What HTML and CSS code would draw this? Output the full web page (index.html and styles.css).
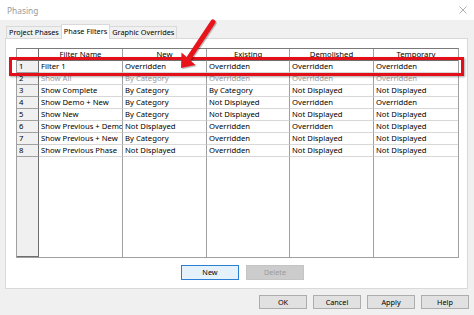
FILE: index.html
```html
<!DOCTYPE html>
<html>
<head>
<meta charset="utf-8">
<link rel="stylesheet" href="styles.css">
</head>
<body>
<div class="window">
  <div class="titlebar">
    <span class="title">Phasing</span>
    <svg class="close" width="8" height="8" viewBox="0 0 8 8"><path d="M0.5 0.5L7.5 7.5M7.5 0.5L0.5 7.5" stroke="#9a9a9a" stroke-width="0.8" fill="none"/></svg>
  </div>
  <div class="tabs">
    <div class="tab">Project Phases</div>
    <div class="tab active">Phase Filters</div>
    <div class="tab">Graphic Overrides</div>
  </div>
  <div class="panel">
    <div class="grid">
      <div class="c hd rh"></div>
      <div class="c hd">Filter Name</div>
      <div class="c hd">New</div>
      <div class="c hd">Existing</div>
      <div class="c hd">Demolished</div>
      <div class="c hd">Temporary</div>

      <div class="c rh">1</div><div class="c">Filter 1</div><div class="c">Overridden</div><div class="c">Overridden</div><div class="c">Overridden</div><div class="c">Overridden</div>
      <div class="c rh">2</div><div class="c faded">Show All</div><div class="c faded">By Category</div><div class="c faded">Overridden</div><div class="c faded">Overridden</div><div class="c faded">Overridden</div>
      <div class="c rh">3</div><div class="c">Show Complete</div><div class="c">By Category</div><div class="c">By Category</div><div class="c">Not Displayed</div><div class="c">Not Displayed</div>
      <div class="c rh">4</div><div class="c">Show Demo + New</div><div class="c">By Category</div><div class="c">Not Displayed</div><div class="c">Overridden</div><div class="c">Overridden</div>
      <div class="c rh">5</div><div class="c">Show New</div><div class="c">By Category</div><div class="c">Not Displayed</div><div class="c">Not Displayed</div><div class="c">Not Displayed</div>
      <div class="c rh">6</div><div class="c">Show Previous + Demo</div><div class="c">Not Displayed</div><div class="c">Overridden</div><div class="c">Overridden</div><div class="c">Not Displayed</div>
      <div class="c rh">7</div><div class="c">Show Previous + New</div><div class="c">By Category</div><div class="c">Overridden</div><div class="c">Not Displayed</div><div class="c">Not Displayed</div>
      <div class="c rh">8</div><div class="c">Show Previous Phase</div><div class="c">Not Displayed</div><div class="c">Overridden</div><div class="c">Not Displayed</div><div class="c">Not Displayed</div>

      <div class="c rh fill"></div><div class="c fill"></div><div class="c fill"></div><div class="c fill"></div><div class="c fill"></div><div class="c fill"></div>
    </div>
    <div class="panel-buttons">
      <div class="btn primary">New</div>
      <div class="btn disabled">Delete</div>
    </div>
  </div>
  <div class="footer">
    <div class="btn">OK</div>
    <div class="btn">Cancel</div>
    <div class="btn">Apply</div>
    <div class="btn">Help</div>
  </div>

  <div class="highlight"></div>
  <svg class="arrow" width="60" height="60" viewBox="0 0 60 60">
    <g opacity="0.25" transform="translate(1.2,1.2)">
      <line x1="43" y1="7" x2="19" y2="43" stroke="#000" stroke-width="5" stroke-linecap="round"/>
      <polygon points="11,53 11.5,37.5 25.5,50" fill="#000"/>
    </g>
    <line x1="43" y1="7" x2="19" y2="43" stroke="#e8141c" stroke-width="5" stroke-linecap="round"/>
    <polygon points="11,53 11.5,37.5 25.5,50" fill="#e8141c"/>
  </svg>
</div>
</body>
</html>
```
FILE: styles.css
```css
html, body {
  margin: 0;
  padding: 0;
}
body {
  width: 474px;
  height: 315px;
  overflow: hidden;
  font-family: "Noto Sans", "Open Sans", sans-serif;
  font-size: 7.7px;
  color: #000;
}
.window {
  position: relative;
  width: 474px;
  height: 315px;
  background: #f0f0f0;
  display: flex;
  flex-direction: column;
}
.titlebar {
  height: 20px;
  background: #ffffff;
  display: flex;
  align-items: center;
  justify-content: space-between;
  padding: 0 7px 0 7px;
}
.title {
  font-size: 8.4px;
  color: #9a9a9a;
}
.close {
  display: block;
}
.tabs {
  display: flex;
  align-items: flex-end;
  padding-left: 6px;
  margin-top: 4px;
  height: 14px;
  position: relative;
  z-index: 1;
}
.tab {
  height: 12px;
  box-sizing: border-box;
  border: 1px solid #d9d9d9;
  border-bottom: none;
  background: #f0f0f0;
  padding: 0 2px;
  line-height: 11px;
  white-space: nowrap;
  font-size: 7.3px;
}
.tab + .tab {
  margin-left: -1px;
}
.tab.active {
  height: 15px;
  margin-bottom: -1px;
  background: #ffffff;
  line-height: 13px;
  padding: 0 2px;
}
.panel {
  margin: 0 6px 0 5px;
  height: 251px;
  box-sizing: border-box;
  background: #ffffff;
  border: 1px solid #d9d9d9;
  padding: 9px 0 0 10px;
  display: flex;
  flex-direction: column;
}
.grid {
  display: grid;
  grid-template-columns: 22px 84px 84px 83px 84px 84px;
  grid-template-rows: 12px repeat(8, 12px) 1fr;
  width: 443px;
  height: 210px;
  box-sizing: border-box;
  border: 1px solid #a0a0a0;
  border-top-color: #7a7a7a;
}
.c {
  box-sizing: border-box;
  border-right: 1px solid #a0a0a0;
  border-bottom: 1px solid #d8d8d8;
  padding-left: 2px;
  line-height: 11px;
  white-space: nowrap;
  overflow: hidden;
}
.c:nth-child(6n) {
  border-right: none;
}
.hd {
  text-align: center;
  padding-left: 0;
  border-bottom: 1px solid #6e6e6e;
  background: #ffffff;
}
.rh {
  background: #f0f0f0;
  border-right: 1px solid #6e6e6e;
  border-bottom: 1px solid #a0a0a0;
}
.hd.rh {
  background: #ffffff;
  border-bottom: 1px solid #6e6e6e;
}
.fill {
  border-bottom: none;
}
.rh.fill {
  border-bottom: 1px solid #6e6e6e;
}
.faded {
  color: #9a9a9a;
}
.panel-buttons {
  display: flex;
  justify-content: center;
  gap: 7px;
  margin-top: 7px;
  padding-left: 2px;
}
.btn {
  width: 48px;
  height: 14px;
  box-sizing: border-box;
  border: 1px solid #adadad;
  background: #e1e1e1;
  text-align: center;
  line-height: 12px;
  font-size: 7.3px;
}
.panel-buttons .btn {
  width: 58px;
  height: 15px;
  line-height: 13px;
}
.btn.primary {
  border-color: #2b7fd3;
  background: #e5f1fb;
}
.btn.disabled {
  border-color: #c4c4c4;
  background: #cccccc;
  color: #9a9a9a;
}
.footer {
  display: flex;
  justify-content: flex-end;
  gap: 6px;
  padding: 6px 5px 0 0;
}
.highlight {
  position: absolute;
  left: 9px;
  top: 57px;
  width: 455px;
  height: 19px;
  box-sizing: border-box;
  border: 3px solid #e3101a;
  box-shadow: 1px 1px 2px rgba(0, 0, 0, 0.35);
}
.arrow {
  position: absolute;
  left: 170px;
  top: 15px;
}
```
